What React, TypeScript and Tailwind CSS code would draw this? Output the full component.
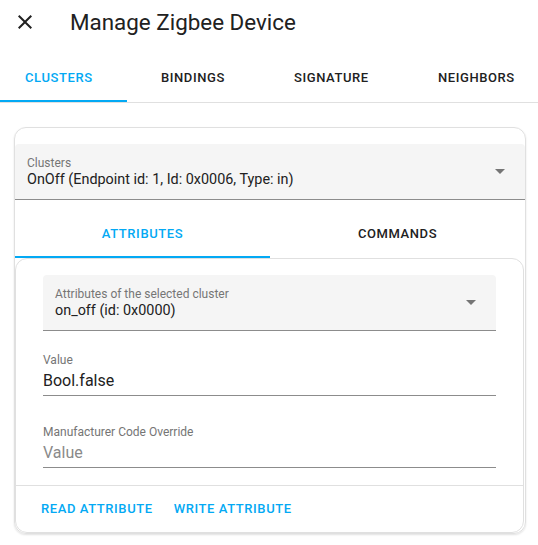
import React from "react"

const BLUE = "text-[#03a9f4]"
const TAB = "uppercase text-[13px] font-medium tracking-[0.045em]"

function Arrow() {
  return (
    <svg width="10" height="5" viewBox="0 0 10 5" aria-hidden="true">
      <path d="M0 0L5 5L10 0Z" fill="#757575" />
    </svg>
  )
}

function SelectBox({ label, value, className = "" }: { label: string; value: string; className?: string }) {
  return (
    <div
      className={`relative h-[56px] bg-[#f5f5f5] rounded-t-[4px] border-b border-[#8c8c8c] pl-[12px] pt-[11px] ${className}`}
    >
      <div className="text-[12px] leading-[16px] text-[#757575]">{label}</div>
      <div className="text-[14.4px] leading-[18px] text-[#212121]">{value}</div>
      <div className="absolute right-[20px] top-[25px] flex">
        <Arrow />
      </div>
    </div>
  )
}

function TextField({ label, value, placeholder, className = "" }: { label: string; value?: string; placeholder?: string; className?: string }) {
  return (
    <div className={`border-b border-[#8c8c8c] pb-[2px] ${className}`}>
      <div className="text-[12px] leading-[16px] text-[#757575]">{label}</div>
      <div className={`mt-[1px] text-[16px] leading-[24px] ${value ? "text-[#212121]" : "text-[#8a8a8a]"}`}>
        {value ?? placeholder}
      </div>
    </div>
  )
}

export default function App() {
  const tabs = ["Clusters", "Bindings", "Signature", "Neighbors"]

  return (
    <div className="w-[538px] h-[545px] bg-white font-['Roboto',sans-serif] text-[#212121] overflow-hidden">
      {/* Header */}
      <div className="h-[44px] flex items-center">
        <div className="w-[24px] h-[24px] ml-[13px]">
          <svg width="24" height="24" viewBox="0 0 24 24" aria-hidden="true">
            <path
              d="M19 6.41L17.59 5 12 10.59 6.41 5 5 6.41 10.59 12 5 17.59 6.41 19 12 13.41 17.59 19 19 17.59 13.41 12z"
              fill="#212121"
            />
          </svg>
        </div>
        <h1 className="ml-[33px] text-[22.4px] leading-none font-normal">Manage Zigbee Device</h1>
      </div>

      {/* Main tabs */}
      <div className="mt-[10px] border-b border-[#e0e0e0]">
        <div className="flex h-[48px]">
          {tabs.map((t, i) => (
            <div
              key={t}
              className={`relative flex items-center ${TAB} ${
                i === 0 ? "w-[127px] pl-[25px]" : i === 1 ? "w-[134px] pl-[34px]" : i === 2 ? "w-[133px] pl-[33px]" : "pl-[44px]"
              } ${i === 0 ? BLUE : "text-[#212121]"}`}
            >
              {t}
              {i === 0 && <div className="absolute left-0 right-0 bottom-0 h-[2px] bg-[#03a9f4]" />}
            </div>
          ))}
        </div>
      </div>

      {/* Card */}
      <div className="ml-[14px] mt-[24px] w-[512px] border border-[#e0e0e0] rounded-[12px] overflow-hidden shadow-[0_1px_2px_rgba(0,0,0,0.12)]">
        <SelectBox
          className="mt-[16px]"
          label="Clusters"
          value="OnOff (Endpoint id: 1, Id: 0x0006, Type: in)"
        />

        {/* Sub tabs */}
        <div className="flex h-[48px] mt-[10px]">
          <div className={`relative flex-1 flex items-center justify-center ${TAB} ${BLUE}`}>
            Attributes
            <div className="absolute left-0 right-0 bottom-0 h-[2px] bg-[#03a9f4]" />
          </div>
          <div className={`flex-1 flex items-center justify-center ${TAB} text-[#212121]`}>
            Commands
          </div>
        </div>

        {/* Inner card */}
        <div className="mr-[1px] border border-[#e0e0e0] rounded-[12px]">
          <div className="px-[27px] pt-[16px]">
            <SelectBox label="Attributes of the selected cluster" value="on_off (id: 0x0000)" />
            <TextField className="mt-[21px]" label="Value" value="Bool.false" />
            <TextField className="mt-[28px]" label="Manufacturer Code Override" placeholder="Value" />
          </div>
          <div className="mt-[17px] border-t border-[#e0e0e0] flex gap-[21px] pl-[25px] pt-[5px] pb-[5px]">
            {["Read attribute", "Write attribute"].map((b) => (
              <button key={b} className={`h-[36px] ${TAB} ${BLUE}`}>
                {b}
              </button>
            ))}
          </div>
        </div>
      </div>
    </div>
  )
}
